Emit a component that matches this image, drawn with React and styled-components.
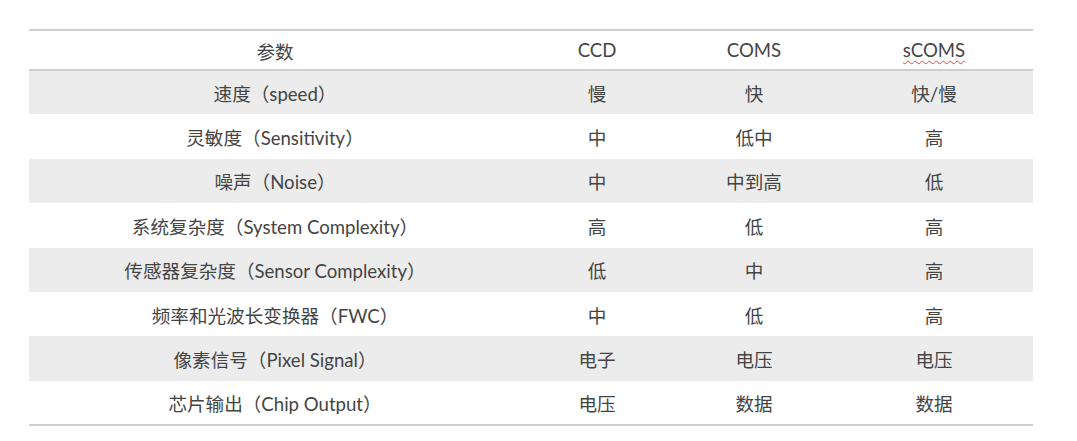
import React from "react";
import styled, { createGlobalStyle } from "styled-components";

const GlobalStyle = createGlobalStyle`
  html, body {
    margin: 0;
    padding: 0;
    background: #ffffff;
  }
  body {
    font-family: "Lato", "Noto Sans CJK SC", sans-serif;
    color: #444444;
  }
`;

const Page = styled.div`
  padding: 29px 44px 0 29px;
`;

const Table = styled.table`
  width: 1004px;
  border-collapse: collapse;
  table-layout: fixed;
  font-size: 18.6px;
  font-weight: 400;
  border-top: 2px solid #cfcfcf;
  border-bottom: 2px solid #cfcfcf;
`;

const HeadRow = styled.tr`
  height: 40px;
  border-bottom: 2px solid #cfcfcf;
`;

const Row = styled.tr`
  height: 44.4px;
  background: ${(p) => (p.striped ? "#ececec" : "#ffffff")};
`;

const Cell = styled.td`
  text-align: center;
  vertical-align: middle;
  padding: 0;
  white-space: nowrap;
`;

const HeadCell = styled.th`
  text-align: center;
  vertical-align: middle;
  padding: 0;
  font-weight: 400;
`;

const Misspelled = styled.span`
  text-decoration: underline wavy #e0483c;
  text-decoration-thickness: 1px;
  text-underline-offset: 3px;
`;

const rows = [
  ["速度（speed）", "慢", "快", "快/慢"],
  ["灵敏度（Sensitivity）", "中", "低中", "高"],
  ["噪声（Noise）", "中", "中到高", "低"],
  ["系统复杂度（System Complexity）", "高", "低", "高"],
  ["传感器复杂度（Sensor Complexity）", "低", "中", "高"],
  ["频率和光波长变换器（FWC）", "中", "低", "高"],
  ["像素信号（Pixel Signal）", "电子", "电压", "电压"],
  ["芯片输出（Chip Output）", "电压", "数据", "数据"],
];

export default function App() {
  return (
    <Page>
      <GlobalStyle />
      <Table>
        <colgroup>
          <col style={{ width: 492 }} />
          <col style={{ width: 152 }} />
          <col style={{ width: 162 }} />
          <col style={{ width: 198 }} />
        </colgroup>
        <thead>
          <HeadRow>
            <HeadCell>参数</HeadCell>
            <HeadCell>CCD</HeadCell>
            <HeadCell>COMS</HeadCell>
            <HeadCell>
              <Misspelled>sCOMS</Misspelled>
            </HeadCell>
          </HeadRow>
        </thead>
        <tbody>
          {rows.map((r, i) => (
            <Row key={r[0]} striped={i % 2 === 0}>
              {r.map((c, j) => (
                <Cell key={j}>{c}</Cell>
              ))}
            </Row>
          ))}
        </tbody>
      </Table>
    </Page>
  );
}
